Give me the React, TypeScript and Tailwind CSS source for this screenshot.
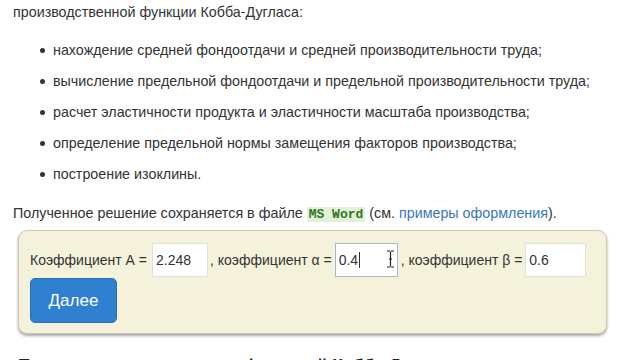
const items = [
  'нахождение средней фондоотдачи и средней производительности труда;',
  'вычисление предельной фондоотдачи и предельной производительности труда;',
  'расчет эластичности продукта и эластичности масштаба производства;',
  'определение предельной нормы замещения факторов производства;',
  'построение изоклины.',
];

const App = () => {
  return (
    <div className="w-[640px] h-[360px] overflow-hidden bg-white text-[#333] text-[14.3px] font-['Liberation_Sans',Arial,sans-serif]">
      <div className="pl-[13px] pt-[2px]">
        <p className="leading-[20px]">производственной функции Кобба-Дугласа:</p>

        <ul className="mt-[13px] pl-[27px]">
          {items.map((item, i) => (
            <li key={i} className="flex items-center h-[31px]">
              <span className="w-[5px] h-[5px] rounded-full bg-[#333] mr-[8px] shrink-0" />
              <span>{item}</span>
            </li>
          ))}
        </ul>

        <p className="mt-[12px] leading-[22px]">
          Полученное решение сохраняется в файле{' '}
          <span className="bg-[#e4f0d8] text-[#2a7a1e] font-bold font-['Liberation_Mono',monospace] text-[13px] px-[2px]">MS Word</span>{' '}
          (см. <span className="text-[#3a78b8]">примеры оформления</span>).
        </p>
      </div>

      <div className="ml-[18px] mt-[4px] w-[589px] h-[104px] rounded-[9px] border border-[#cdc9b0] bg-[#f5f2dc] shadow-[0_2px_3px_rgba(0,0,0,0.35)] pl-[11px] pt-[12px]">
        <div className="flex items-center h-[34px] text-[14px]">
          <span className="mr-[5px]">Коэффициент А =</span>
          <div className="w-[56px] h-[34px] bg-white border border-[#e2e0d2] flex items-center pl-[3px]">2.248</div>
          <span className="ml-[2px] mr-[3px]">, коэффициент α =</span>
          <div className="relative w-[63px] h-[34px] bg-white border border-[#9fb9d6] flex items-center pl-[3px]">
            0.4<span className="inline-block w-px h-[16px] bg-[#333] ml-px" />
            <svg className="absolute left-[50px] top-[6px]" width="9" height="18" viewBox="0 0 9 18">
              <path d="M1 1h3M5 1h3M4.5 1.5v15M1 17h3M5 17h3M3 9h3" stroke="#222" strokeWidth="1.2" fill="none" />
            </svg>
          </div>
          <span className="ml-[3px] mr-[3px]">, коэффициент β =</span>
          <div className="w-[61px] h-[34px] bg-white border border-[#e2e0d2] flex items-center pl-[3px]">0.6</div>
        </div>
        <button className="mt-[1px] w-[87px] h-[45px] rounded-[5px] bg-[#2f80d1] border border-[#2a6fb3] text-white text-[17px] font-['Liberation_Sans',Arial,sans-serif]">
          Далее
        </button>
      </div>

      <p className="ml-[18px] mt-[21px] text-[17px] font-bold text-[#222] leading-[22px]">
        Пример решения задачи с функцией Кобба-Дугласа
      </p>
    </div>
  );
};

export default App;
